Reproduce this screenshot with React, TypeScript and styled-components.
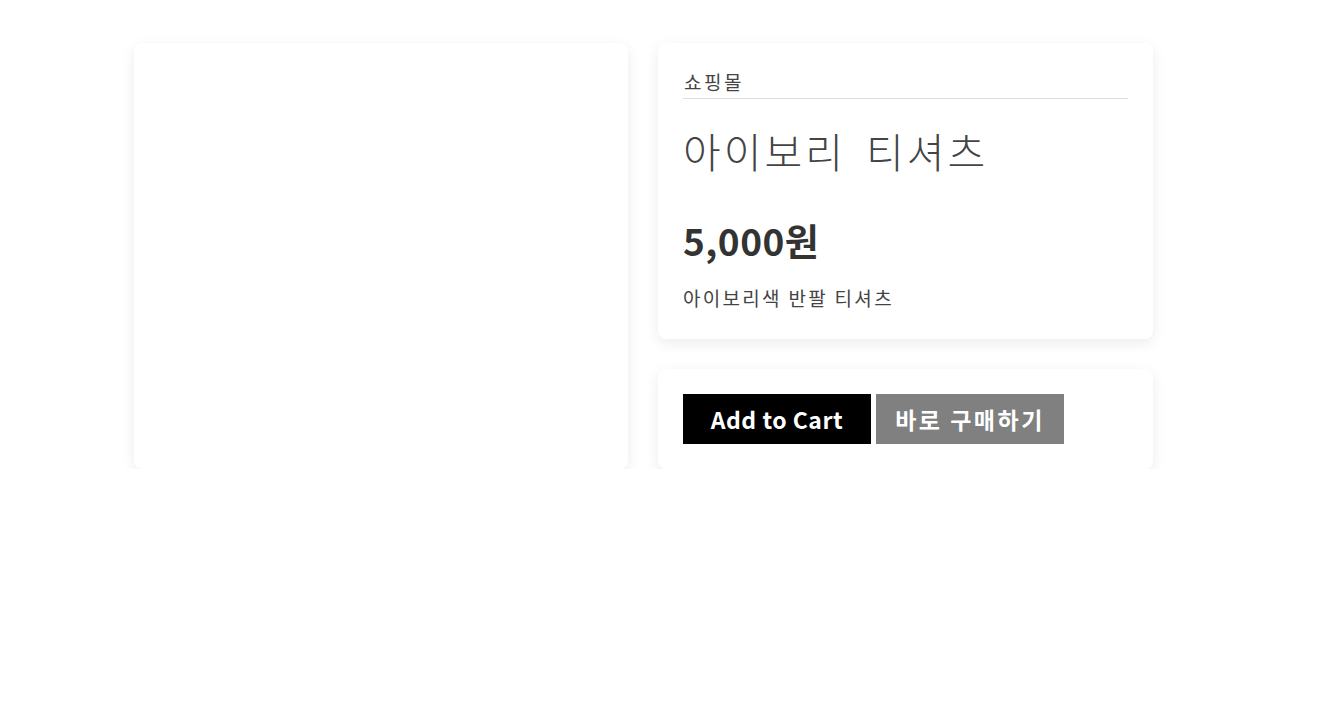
import React from 'react';
import styled, { createGlobalStyle } from 'styled-components';

const GlobalStyle = createGlobalStyle`
  body {
    margin: 0;
    background: #fff;
    font-family: 'Noto Sans CJK KR', 'Noto Sans', sans-serif;
    color: #444;
  }
`;

const Page = styled.div`
  display: grid;
  grid-template-columns: 494px 495px;
  column-gap: 30px;
  align-items: start;
  padding: 43px 0 0 134px;
`;

const Card = styled.div`
  background: #fff;
  border-radius: 8px;
  box-shadow: 0 4px 14px rgba(0, 0, 0, 0.08);
`;

const ImageCard = styled(Card)`
  height: 426px;
`;

const Column = styled.div`
  display: flex;
  flex-direction: column;
  gap: 30px;
`;

const InfoCard = styled(Card)`
  height: 296px;
  box-sizing: border-box;
  padding: 25px 25px 0;
`;

const Shop = styled.div`
  font-size: 19px;
  letter-spacing: 2.5px;
  line-height: 28px;
  padding: 0 0 2px 1px;
  color: #444;
  border-bottom: 1px solid #ddd;
`;

const Title = styled.h1`
  margin: 22px 0 0;
  font-size: 41px;
  font-weight: 300;
  letter-spacing: 3px;
  word-spacing: 8px;
  line-height: 58px;
  color: #444;
`;

const Price = styled.div`
  margin-top: 38px;
  font-size: 37px;
  font-weight: 700;
  letter-spacing: 0.5px;
  line-height: 46px;
  color: #333;
`;

const Desc = styled.p`
  margin: 21px 0 0;
  font-size: 19px;
  letter-spacing: 2.3px;
  line-height: 28px;
  color: #444;
`;

const ActionCard = styled(Card)`
  display: flex;
  gap: 5px;
  padding: 25px;
`;

const Button = styled.button<{ $tone: 'dark' | 'gray' }>`
  width: 188px;
  height: 50px;
  border: none;
  background: ${(p) => (p.$tone === 'dark' ? '#000' : '#808080')};
  color: #fff;
  font-family: 'Noto Sans CJK KR', 'Noto Sans', sans-serif;
  font-size: 23px;
  font-weight: 700;
  letter-spacing: ${(p) => (p.$tone === 'dark' ? '0.5px' : '2.5px')};
  cursor: pointer;
  padding: 0;
`;

export default function App() {
  return (
    <>
      <GlobalStyle />
      <Page>
        <ImageCard />
        <Column>
          <InfoCard>
            <Shop>쇼핑몰</Shop>
            <Title>아이보리 티셔츠</Title>
            <Price>5,000원</Price>
            <Desc>아이보리색 반팔 티셔츠</Desc>
          </InfoCard>
          <ActionCard>
            <Button $tone="dark">Add to Cart</Button>
            <Button $tone="gray">바로 구매하기</Button>
          </ActionCard>
        </Column>
      </Page>
    </>
  );
}
